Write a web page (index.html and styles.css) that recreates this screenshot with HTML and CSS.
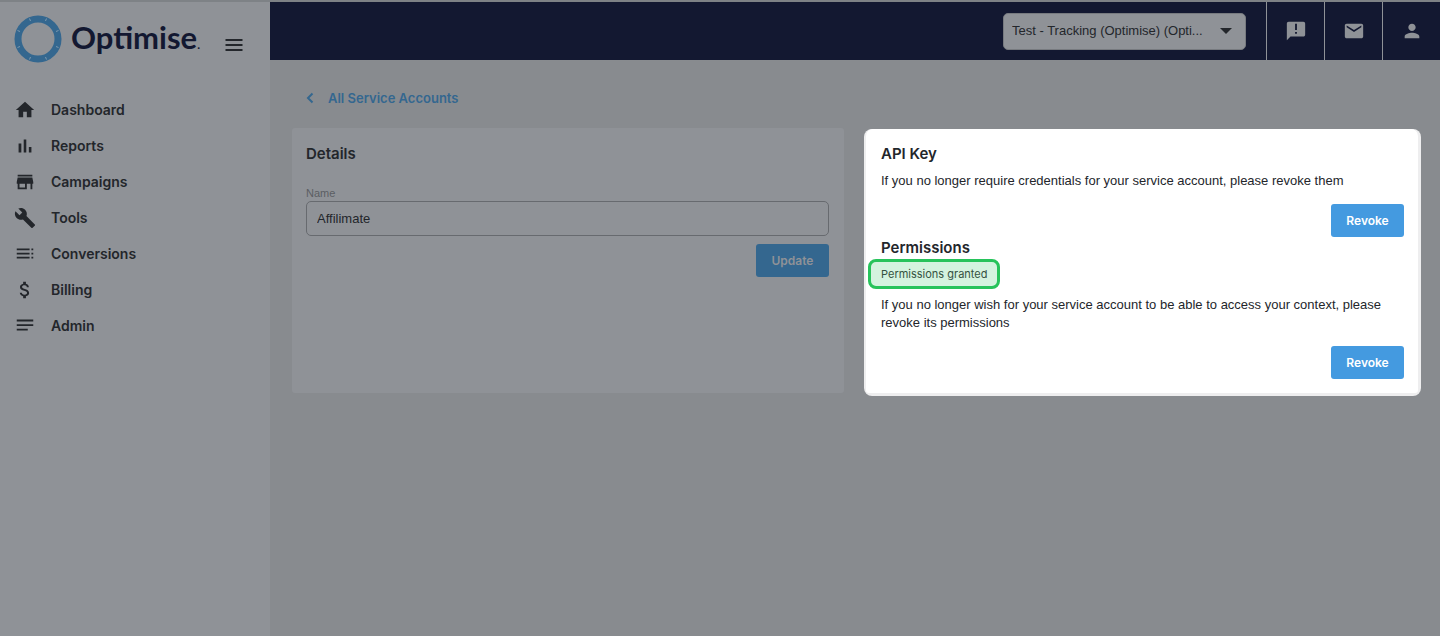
FILE: index.html
```html
<!DOCTYPE html>
<html lang="en">
<head>
    <meta charset="UTF-8">
    <meta name="viewport" content="width=device-width, initial-scale=1.0">
    <title>Service Account - Optimise</title>
    <link rel="stylesheet" href="styles.css">
</head>
<body>
    <div class="app">
        <aside class="sidebar">
            <div class="brand">
                <svg class="brand-ring" viewBox="0 0 48 48" width="48" height="48" aria-hidden="true">
                    <circle cx="24" cy="24" r="20" fill="none" stroke="#34678f" stroke-width="7"/>
                    <path d="M15.500 3.500l1 2.500M32.500 3.500l-1 2.500M3.500 15.500l2.500 1M44.500 15.500l-2.500 1M3.500 32.500l2.500-1M44.500 32.500l-2.500-1M15.500 44.500l1-2.500M32.500 44.500l-1-2.500" stroke="#7d98ae" fill="none"/>
                </svg>
                <span class="brand-name">Optimise<span class="brand-dot">.</span></span>
                <button class="menu-toggle" type="button" aria-label="Toggle menu">
                    <svg viewBox="0 0 24 24" width="24" height="24"><path d="M3.500 18h17v-2h-17v2zm0-5h17v-2h-17v2zm0-7v2h17V6h-17z"/></svg>
                </button>
            </div>
            <nav class="nav">
                <a href="#"><svg viewBox="0 0 24 24"><path d="M10 20v-6h4v6h5v-8h3L12 3 2 12h3v8z"/></svg>Dashboard</a>
                <a href="#"><svg viewBox="0 0 24 24"><path d="M5 9.200h3V19H5zM10.600 5h2.800v14h-2.800zm5.600 8H19v6h-2.800z"/></svg>Reports</a>
                <a href="#"><svg viewBox="0 0 24 24"><path d="M20 4H4v2h16V4zm1 10v-2l-1-5H4l-1 5v2h1v6h10v-6h4v6h2v-6h1zm-9 4H6v-4h6v4z"/></svg>Campaigns</a>
                <a href="#"><svg viewBox="0 0 24 24"><path d="M22.700 19l-9.100-9.100c.9-2.300.4-5-1.500-6.900-2-2-5-2.400-7.400-1.300L9 6 6 9 1.600 4.700C.4 7.100.9 10.100 2.900 12.100c1.900 1.900 4.600 2.400 6.900 1.500l9.100 9.100c.4.4 1 .4 1.400 0l2.300-2.300c.5-.4.5-1.100.1-1.400z"/></svg>Tools</a>
                <a href="#"><svg viewBox="0 0 24 24"><path d="M3 8h14V6H3v2zm0 4.500h14v-2H3v2zM3 17h14v-2H3v2zm16 0h2v-2h-2v2zm0-11v2h2V6h-2zm0 6.500h2v-2h-2v2z"/></svg>Conversions</a>
                <a href="#"><svg viewBox="0 0 24 24"><path d="M11.800 10.900c-2.270-.59-3-1.200-3-2.150 0-1.090 1.010-1.850 2.700-1.850 1.780 0 2.440.85 2.500 2.100h2.210c-.07-1.720-1.120-3.300-3.210-3.810V3h-3v2.160c-1.940.42-3.500 1.680-3.500 3.610 0 2.310 1.910 3.460 4.700 4.130 2.500.6 3 1.480 3 2.410 0 .69-.49 1.790-2.700 1.790-2.060 0-2.870-.92-2.980-2.100h-2.200c.12 2.190 1.760 3.420 3.680 3.830V21h3v-2.150c1.950-.37 3.500-1.500 3.500-3.550 0-2.840-2.430-3.810-4.700-4.400z"/></svg>Billing</a>
                <a href="#"><svg viewBox="0 0 24 24"><path d="M3 17h12v-2H3v2zM3 5v2h18V5H3zm0 7h18v-2H3v2z"/></svg>Admin</a>
            </nav>
        </aside>

        <div class="content">
            <header class="topbar">
                <select class="account-select" aria-label="Account">
                    <option>Test - Tracking (Optimise) (Opti...</option>
                </select>
                <button class="topbar-button" type="button" aria-label="Feedback">
                    <svg viewBox="0 0 24 24"><path d="M20 2H4c-1.100 0-2 .9-2 2v18l4-4h14c1.100 0 2-.9 2-2V4c0-1.100-.9-2-2-2zm-7 13h-2v-2h2v2zm0-4h-2V4h2v7z"/></svg>
                </button>
                <button class="topbar-button" type="button" aria-label="Messages">
                    <svg viewBox="0 0 24 24"><path d="M20 4H4c-1.100 0-2 .9-2 2v12c0 1.100.9 2 2 2h16c1.100 0 2-.9 2-2V6c0-1.100-.9-2-2-2zm0 4l-8 5-8-5V6l8 5 8-5v2z"/></svg>
                </button>
                <button class="topbar-button" type="button" aria-label="Profile">
                    <svg viewBox="0 0 24 24"><path d="M12 12c2.210 0 4-1.790 4-4s-1.790-4-4-4-4 1.790-4 4 1.790 4 4 4zm0 2c-2.670 0-8 1.340-8 4v2h16v-2c0-2.660-5.330-4-8-4z"/></svg>
                </button>
            </header>

            <main class="main">
                <a class="back" href="#">
                    <svg viewBox="0 0 8 12" width="8" height="12"><path d="M6.500 1.500L2 6l4.500 4.500"/></svg>
                    All Service Accounts
                </a>
                <div class="cards">
                    <form class="card">
                        <h2>Details</h2>
                        <label for="name">Name</label>
                        <input id="name" type="text" value="Affilimate">
                        <div class="actions">
                            <button class="btn btn-dim" type="button">Update</button>
                        </div>
                    </form>
                    <div class="spotlight">
                        <section class="card card-lit">
                            <h2>API Key</h2>
                            <p>If you no longer require credentials for your service account, please revoke them</p>
                            <div class="actions">
                                <button class="btn" type="button">Revoke</button>
                            </div>
                            <h2>Permissions</h2>
                            <div class="granted">Permissions granted</div>
                            <p>If you no longer wish for your service account to be able to access your context, please revoke its permissions</p>
                            <div class="actions">
                                <button class="btn" type="button">Revoke</button>
                            </div>
                        </section>
                    </div>
                </div>
            </main>
        </div>
    </div>
</body>
</html>
```
FILE: styles.css
```css
* {
    box-sizing: border-box;
}

body {
    margin: 0;
    background-color: #888b8f;
    color: #23262b;
    font-family: "Liberation Sans", Arial, sans-serif;
    font-size: 13px;
    line-height: 18px;
}

button,
input,
select {
    font: inherit;
}

a {
    text-decoration: none;
}

.app {
    display: grid;
    grid-template-columns: 270px 1fr;
    min-height: 100vh;
    border-top: 2px solid #7e8286;
}

/* sidebar */
.sidebar {
    background-color: #8f9297;
}

.brand {
    display: flex;
    align-items: center;
    height: 74px;
    padding-left: 14px;
}

.brand-name {
    flex: 1;
    margin-left: 9px;
    padding-top: 4px;
    color: #131831;
    font-family: Lato, sans-serif;
    font-size: 31px;
    font-weight: 700;
    line-height: 40px;
}

.brand-dot {
    font-size: 12px;
}

.menu-toggle {
    display: flex;
    margin: 12px 24px 0 0;
    padding: 0;
    border: 0;
    background: none;
    fill: #23262b;
}

.nav {
    display: flex;
    flex-direction: column;
    padding: 16px 14px;
}

.nav a {
    display: flex;
    align-items: center;
    gap: 15px;
    height: 36px;
    color: #23262b;
    font-family: Inter, sans-serif;
    font-size: 14px;
    font-weight: 600;
}

.nav svg {
    width: 22px;
    height: 22px;
    fill: #23262b;
}

/* top bar */
.topbar {
    display: flex;
    align-items: center;
    justify-content: flex-end;
    height: 58px;
    background-color: #131831;
}

.account-select {
    width: 243px;
    height: 37px;
    margin-right: 20px;
    padding: 0 28px 0 8px;
    border: 1px solid #777a7f;
    border-radius: 5px;
    appearance: none;
    background: #8f9297 url("data:image/svg+xml,%3Csvg xmlns='http://www.w3.org/2000/svg' width='12' height='6'%3E%3Cpath d='M0 0h12L6 6z' fill='%2323262b'/%3E%3C/svg%3E") no-repeat right 13px center;
    color: #23262b;
}

.topbar-button {
    display: flex;
    align-items: center;
    justify-content: center;
    width: 58px;
    height: 58px;
    padding: 0;
    border: 0;
    border-left: 1px solid #8f9297;
    background: none;
    fill: #8f9297;
}

.topbar-button svg {
    width: 22px;
    height: 22px;
}

/* page */
.main {
    padding: 28px 22px;
}

.back {
    display: flex;
    align-items: center;
    gap: 14px;
    width: fit-content;
    height: 20px;
    margin-left: 14px;
    color: #34678f;
    font-family: Inter, sans-serif;
    font-size: 13px;
    font-weight: 600;
}

.back svg {
    fill: none;
    stroke: #34678f;
    stroke-width: 2;
}

.cards {
    display: grid;
    grid-template-columns: 1fr 1fr;
    gap: 22px;
    margin-top: 20px;
}

.card {
    padding: 15px 15px 14px 14px;
    border-radius: 3px;
    background-color: #8f9297;
}

.card h2 {
    margin: 0;
    font-family: Inter, sans-serif;
    font-size: 15px;
    font-weight: 600;
    line-height: 22px;
}

.card p {
    margin: 7px 0 14px;
}

.card label {
    display: block;
    margin-top: 20px;
    color: #5b5e63;
    font-size: 11px;
    line-height: 16px;
}

.card input {
    display: block;
    width: 100%;
    height: 35px;
    padding: 0 10px;
    border: 1px solid #676a6f;
    border-radius: 5px;
    background: none;
    color: #23262b;
}

.actions {
    display: flex;
    justify-content: flex-end;
    margin-top: 8px;
}

.btn {
    width: 73px;
    height: 33px;
    padding: 0;
    border: 0;
    border-radius: 3px;
    background-color: #449ae0;
    color: #fff;
    font-family: Inter, sans-serif;
    font-size: 12px;
    font-weight: 600;
}

.btn-dim {
    background-color: #34678f;
    color: #8f9297;
}

/* highlighted card, drawn above the dimmed page */
.spotlight {
    margin: 1px -3px -3px -2px;
    padding: 0 3px 3px 2px;
    border-radius: 8px;
    background-color: #eeeeef;
}

.card-lit {
    padding: 14px 14px 14px 15px;
    border-radius: 7px 7px 3px 3px;
    background-color: #fff;
}

.granted {
    width: fit-content;
    margin-left: -13px;
    padding: 4px 10px;
    border: 3px solid #27c35b;
    border-radius: 8px;
    background-color: #d4f3df;
    color: #35523f;
    font-family: Inter, sans-serif;
    font-size: 11px;
    line-height: 16px;
}
```
